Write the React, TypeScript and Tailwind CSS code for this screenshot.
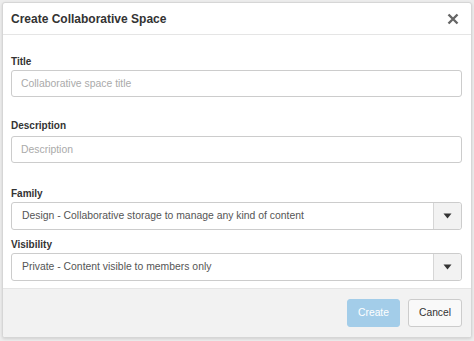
import React from "react";

function Caret() {
  return (
    <svg width="9" height="6" viewBox="0 0 9 6" className="block">
      <path d="M0.5 0.5 L8.5 0.5 L4.5 5.5 Z" fill="#333" />
    </svg>
  );
}

function SelectBox({ value }: { value: string }) {
  return (
    <div className="flex h-[28px] w-[451px] rounded-[3px] border border-[#cccccc] bg-white">
      <div className="flex flex-1 items-center pl-[10px] text-[10.4px] text-[#555]">{value}</div>
      <div className="flex w-[28px] items-center justify-center border-l border-[#d6d6d6] bg-[#f2f2f2] rounded-r-[3px]">
        <Caret />
      </div>
    </div>
  );
}

function TextInput({ placeholder }: { placeholder: string }) {
  return (
    <input
      placeholder={placeholder}
      className="block h-[27px] w-[451px] rounded-[3px] border border-[#cccccc] bg-white pl-[9px] text-[10.4px] text-[#555] outline-none placeholder:text-[#aaaaaa]"
      style={{ fontFamily: '"Liberation Sans", Arial, sans-serif' }}
    />
  );
}

export default function App() {
  return (
    <div
      className="h-[341px] w-[474px] bg-[#ededed] pl-[2px] pt-[2px]"
      style={{ fontFamily: '"Liberation Sans", Arial, sans-serif' }}
    >
      <div className="flex h-[336px] w-[470px] flex-col overflow-hidden rounded-[3px] border border-[#d6d6d6] bg-white shadow-[0_1px_3px_rgba(0,0,0,0.12)]">
        <div className="flex h-[32px] shrink-0 items-center justify-between border-b border-[#e5e5e5] pl-[8px] pr-[12px]">
          <span className="text-[12px] font-bold text-[#333]">Create Collaborative Space</span>
          <svg width="12" height="12" viewBox="0 0 12 12" className="block">
            <path d="M1.5 1.5 L10.5 10.5 M10.5 1.5 L1.5 10.5" stroke="#666" strokeWidth="2.4" strokeLinecap="butt" />
          </svg>
        </div>
        <div className="flex flex-1 flex-col pl-[8px] pt-[19px]">
          <label className="block h-[16px] text-[10px] font-bold leading-[16px] text-[#333]">Title</label>
          <TextInput placeholder="Collaborative space title" />
          <label className="mt-[21px] mb-[2px] block h-[16px] text-[10px] font-bold leading-[16px] text-[#333]">Description</label>
          <TextInput placeholder="Description" />
          <label className="mt-[23px] block h-[16px] text-[10px] font-bold leading-[16px] text-[#333]">Family</label>
          <SelectBox value="Design - Collaborative storage to manage any kind of content" />
          <label className="mt-[7px] block h-[16px] text-[10px] font-bold leading-[16px] text-[#333]">Visibility</label>
          <SelectBox value="Private - Content visible to members only" />
        </div>
        <div className="flex h-[49px] shrink-0 items-start justify-end gap-[8px] border-t border-[#e5e5e5] bg-[#f2f2f2] pr-[9px] pt-[10px]">
          <button className="h-[28px] w-[53px] rounded-[3px] border border-[#a3cde9] bg-[#a3cde9] text-[10.3px] text-white">
            Create
          </button>
          <button className="h-[28px] w-[54px] rounded-[3px] border border-[#cccccc] bg-[#f9f9f9] text-[10.3px] text-[#333]">
            Cancel
          </button>
        </div>
      </div>
    </div>
  );
}
